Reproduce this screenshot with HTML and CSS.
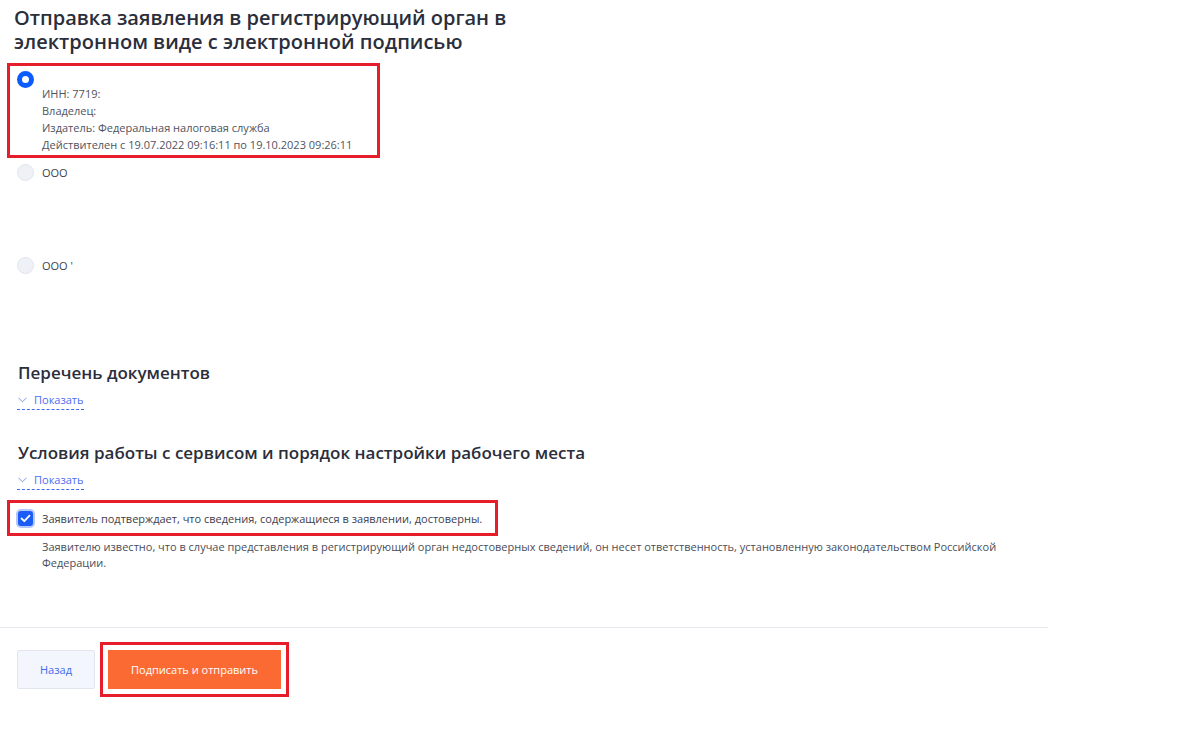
FILE: index.html
```html
<!DOCTYPE html>
<html lang="ru">
<head>
<meta charset="utf-8">
<title>Отправка заявления</title>
<link rel="stylesheet" href="styles.css">
</head>
<body>
<main class="page">
  <h1 class="title">Отправка заявления в регистрирующий орган в<br>электронном виде с электронной подписью</h1>

  <ul class="certs">
    <li class="cert marked">
      <span class="radio radio-on"></span>
      <div class="cert-body">
        <div class="cert-name">&nbsp;</div>
        <div class="cert-lines">
          <div>ИНН: 7719:</div>
          <div>Владелец:</div>
          <div>Издатель: Федеральная налоговая служба</div>
          <div>Действителен с 19.07.2022 09:16:11 по 19.10.2023 09:26:11</div>
        </div>
      </div>
    </li>
    <li class="cert">
      <span class="radio"></span>
      <div class="cert-body">
        <div class="cert-name">ООО</div>
        <div class="cert-lines">
          <div>&nbsp;</div><div>&nbsp;</div><div>&nbsp;</div><div>&nbsp;</div>
        </div>
      </div>
    </li>
    <li class="cert">
      <span class="radio"></span>
      <div class="cert-body">
        <div class="cert-name">ООО '</div>
        <div class="cert-lines">
          <div>&nbsp;</div><div>&nbsp;</div><div>&nbsp;</div><div>&nbsp;</div>
        </div>
      </div>
    </li>
  </ul>

  <section class="block block-first">
    <h2 class="block-title">Перечень документов</h2>
    <a class="toggle" href="#"><svg class="chev" width="9" height="6" viewBox="0 0 9 6"><polyline points="0.5,0.8 4.5,4.8 8.5,0.8" fill="none" stroke="#7b93f0" stroke-width="1"/></svg><span>Показать</span></a>
  </section>

  <section class="block">
    <h2 class="block-title">Условия работы с сервисом и порядок настройки рабочего места</h2>
    <a class="toggle" href="#"><svg class="chev" width="9" height="6" viewBox="0 0 9 6"><polyline points="0.5,0.8 4.5,4.8 8.5,0.8" fill="none" stroke="#7b93f0" stroke-width="1"/></svg><span>Показать</span></a>
  </section>

  <div class="confirm marked">
    <span class="checkbox"><svg width="11" height="9" viewBox="0 0 11 9"><polyline points="1.5,4.5 4.3,7.2 9.5,1.6" fill="none" stroke="#fff" stroke-width="1.8" stroke-linecap="round" stroke-linejoin="round"/></svg></span>
    <span class="confirm-text">Заявитель подтверждает, что сведения, содержащиеся в заявлении, достоверны.</span>
  </div>
  <p class="note">Заявителю известно, что в случае представления в регистрирующий орган недостоверных сведений, он несет ответственность, установленную законодательством Российской Федерации.</p>
</main>

<footer class="actions">
  <button class="btn btn-back" type="button">Назад</button>
  <button class="btn btn-send marked-btn" type="button">Подписать и отправить</button>
</footer>
</body>
</html>
```

FILE: styles.css
```css
* { box-sizing: border-box; }

html, body {
  margin: 0;
  padding: 0;
  background: #ffffff;
}

body {
  font-family: "Open Sans", "Noto Sans", Arial, sans-serif;
  color: #2c2f3a;
  width: 1200px;
  height: 736px;
  overflow: hidden;
}

.page {
  width: 1048px;
  padding: 6px 0 0 0;
}

.title {
  margin: 0 0 0 14px;
  font-size: 20px;
  line-height: 24px;
  font-weight: 600;
  color: #2b2e3b;
}

.certs {
  list-style: none;
  margin: 12px 0 0 0;
  padding: 0;
  display: flex;
  flex-direction: column;
  gap: 4px;
}

.cert {
  display: flex;
  align-items: flex-start;
  gap: 8px;
  margin-left: 10px;
  width: 367px;
  padding: 5px 7px 2px 7px;
}

.marked {
  outline: 3px solid #e61e2b;
}

.radio {
  flex: none;
  width: 17px;
  height: 17px;
  border-radius: 50%;
  background: #eef1f6;
  border: 1px solid #e0e5ee;
}

.radio-on {
  background: #ffffff;
  border: 5px solid #0b5cff;
}

.cert-body {
  font-size: 11px;
  color: #4f5360;
}

.cert-name {
  line-height: 17px;
  color: #3b3f4c;
}

.cert-lines {
  margin-top: -3px;
  line-height: 17px;
}

.block {
  margin-left: 18px;
}

.block-first {
  margin-top: 20px;
}

.block + .block {
  margin-top: 31px;
}

.block-title {
  margin: 0;
  font-size: 17px;
  line-height: 24px;
  font-weight: 600;
  color: #2b2e3b;
}

.toggle {
  display: inline-flex;
  align-items: center;
  gap: 7px;
  margin-top: 7px;
  margin-left: -1px;
  font-size: 11px;
  line-height: 16px;
  color: #4d6ef2;
  text-decoration: none;
  border-bottom: 1px dashed #3f68ef;
  padding: 0 0 1px 1px;
}

.chev {
  display: block;
}

.confirm {
  display: flex;
  align-items: center;
  gap: 9px;
  margin: 13px 0 0 10px;
  width: 485px;
  height: 30px;
  padding: 0 0 0 8px;
}

.checkbox {
  flex: none;
  width: 15px;
  height: 15px;
  border-radius: 3px;
  background: #1b5cf6;
  box-shadow: 0 0 0 2px #b3c7fb;
  display: flex;
  align-items: center;
  justify-content: center;
}

.checkbox svg { display: block; }

.confirm-text {
  font-size: 11px;
  color: #3c404c;
}

.note {
  margin: 6px 0 0 42px;
  width: 990px;
  font-size: 11px;
  line-height: 16px;
  color: #4a4e5a;
}

.actions {
  margin-top: 56px;
  width: 1048px;
  border-top: 1px solid #e4e7ec;
  padding: 22px 0 0 17px;
  display: flex;
  gap: 13px;
}

.btn {
  height: 39px;
  font-family: "Open Sans", "Noto Sans", Arial, sans-serif;
  font-size: 11px;
  border-radius: 2px;
  cursor: pointer;
}

.btn-back {
  width: 78px;
  background: #f3f6fc;
  border: 1px solid #e0e5ee;
  color: #3f6af0;
}

.btn-send {
  width: 173px;
  background: #fc6a33;
  border: none;
  border-radius: 0;
  color: #ffffff;
}

.marked-btn {
  outline: 3px solid #e61e2b;
  outline-offset: 5px;
}
```
